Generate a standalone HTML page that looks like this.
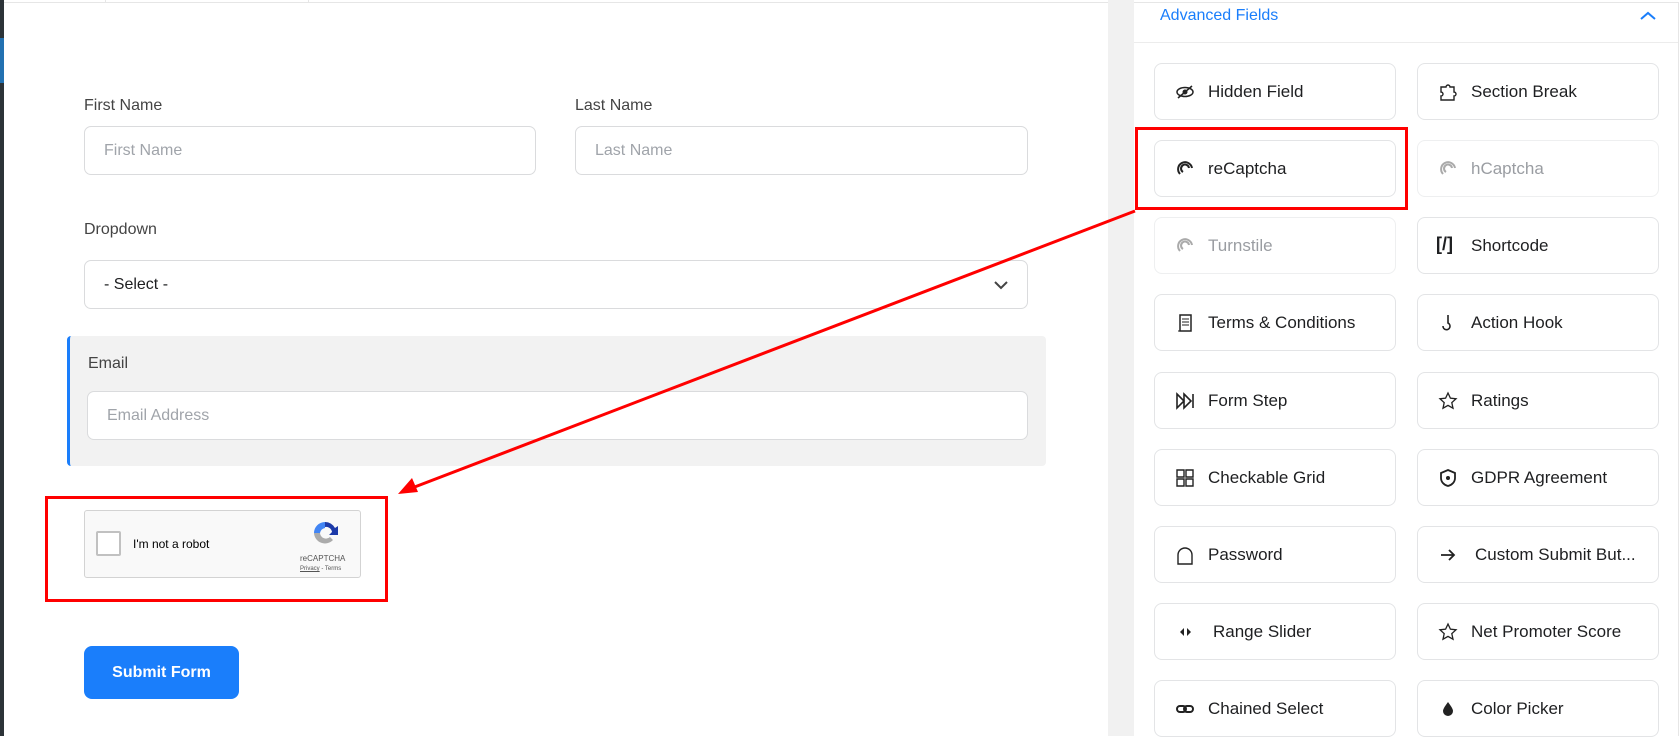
<!DOCTYPE html>
<html><head><meta charset="utf-8"><style>
*{box-sizing:border-box;margin:0;padding:0}
body{width:1679px;height:736px;overflow:hidden;background:#fff;font-family:"Liberation Sans",sans-serif;position:relative;color:#1e1f21}
.a{position:absolute}
.lbl{font-size:16px;color:#444}
.inp{border:1px solid #dadbdd;border-radius:7px;background:#fff;font-size:16px;color:#a0a4aa;padding-left:19px;display:flex;align-items:center}
.card{position:absolute;width:242px;height:57px;border:1px solid #e3e4e6;border-radius:8px;background:#fff;font-size:17px;color:#1e1f21}
.card .ic{position:absolute;left:20px;top:18px;width:20px;height:20px}
.card .t{position:absolute;left:53px;top:18px;white-space:nowrap}
.dis{color:#9a9da2;border-color:#eeeff0}
</style></head><body>
<div class="a" style="left:0;top:0;width:4px;height:736px;background:#2c3338"></div>
<div class="a" style="left:0;top:38px;width:4px;height:45px;background:#2271b1"></div>
<div class="a" style="left:4px;top:2px;width:1104px;height:1px;background:#e6e6e6"></div>
<div class="a" style="left:105px;top:0;width:1px;height:2px;background:#e6e6e6"></div>
<div class="a" style="left:308px;top:0;width:1px;height:2px;background:#e6e6e6"></div>

<div class="a lbl" style="left:84px;top:97px">First Name</div>
<div class="a inp" style="left:84px;top:126px;width:452px;height:49px">First Name</div>
<div class="a lbl" style="left:575px;top:97px">Last Name</div>
<div class="a inp" style="left:575px;top:126px;width:453px;height:49px">Last Name</div>
<div class="a lbl" style="left:84px;top:221px">Dropdown</div>
<div class="a inp" style="left:84px;top:260px;width:944px;height:49px;color:#1e1f21">- Select -</div>
<svg class="a" style="left:994px;top:280px" width="14" height="10"><path d="M1 2l6 6 6-6" stroke="#444" stroke-width="2" fill="none"/></svg>

<div class="a" style="left:67px;top:336px;width:979px;height:130px;background:#f2f2f2;border-left:3px solid #1a7efb;border-radius:4px"></div>
<div class="a lbl" style="left:88px;top:355px">Email</div>
<div class="a inp" style="left:87px;top:391px;width:941px;height:49px">Email Address</div>

<div class="a" style="left:45px;top:496px;width:343px;height:106px;border:3px solid #f00"></div>
<div class="a" style="left:84px;top:510px;width:277px;height:68px;background:#f9f9f9;border:1px solid #d3d3d3;border-radius:3px"></div>
<div class="a" style="left:96px;top:531px;width:25px;height:25px;background:#fff;border:2px solid #c1c1c1;border-radius:2px"></div>
<div class="a" style="left:133px;top:537px;font-size:12px;color:#000">I'm not a robot</div>
<svg class="a" style="left:311px;top:519px" width="28" height="28" viewBox="0 0 28 28"><path d="M14 3a11 11 0 0 1 10 6l3-2v9h-9l3-3a6 6 0 0 0-7-5z" fill="#1c3aa9"/><path d="M3 14A11 11 0 0 1 14 3v6a6 6 0 0 0-5 5z" fill="#4285f4"/><path d="M3 14h6a6 6 0 0 0 10 4l3 3A11 11 0 0 1 3 14z" fill="#ababab"/></svg>
<div class="a" style="left:300px;top:554px;font-size:8px;color:#555">reCAPTCHA</div>
<div class="a" style="left:300px;top:566px;font-size:6px;color:#555"><u>Privacy</u> - Terms</div>

<div class="a" style="left:84px;top:646px;width:155px;height:53px;background:#1a7efb;border-radius:8px;color:#fff;font-weight:bold;font-size:16px;display:flex;align-items:center;justify-content:center">Submit Form</div>

<div class="a" style="left:1108px;top:0;width:26px;height:736px;background:#f1f1f1"></div>
<div class="a" style="left:1134px;top:2px;width:545px;height:734px;border-right:1px solid #e6e6e6;border-top:1px solid #e6e6e6"></div>
<div class="a" style="left:1134px;top:42px;width:544px;height:1px;background:#ececec"></div>
<div class="a" style="left:1160px;top:7px;font-size:16px;color:#1a7efb">Advanced Fields</div>
<svg class="a" style="left:1640px;top:11px" width="16" height="10"><path d="M1 8l7-6 7 6" stroke="#1a7efb" stroke-width="2" fill="none"/></svg>

<div class="card" style="left:1154px;top:63px"><svg class="ic" viewBox="0 0 20 20"><ellipse cx="10" cy="10" rx="8" ry="4.5" fill="none" stroke="#222" stroke-width="1.5"/><circle cx="10" cy="10" r="2.5" fill="#222"/><path d="M3 16L17 4" stroke="#222" stroke-width="1.5"/></svg><span class="t">Hidden Field</span></div>
<div class="card" style="left:1417px;top:63px"><svg class="ic" viewBox="0 0 20 20"><path d="M3 5h5a2 2 0 1 1 4 0h4v5a2 2 0 1 1 0 4v4H3v-4a2 2 0 1 0 0-4z" fill="none" stroke="#222" stroke-width="1.4"/></svg><span class="t">Section Break</span></div>
<div class="card" style="left:1154px;top:140px"><svg class="ic" viewBox="0 0 20 20"><path d="M5 15A7 7 0 1 1 17 9M8 13a4 4 0 1 1 6-4" fill="none" stroke="#222" stroke-width="2"/></svg><span class="t">reCaptcha</span></div>
<div class="card dis" style="left:1417px;top:140px"><svg class="ic" viewBox="0 0 20 20"><path d="M5 15A7 7 0 1 1 17 9M8 13a4 4 0 1 1 6-4" fill="none" stroke="#aaa" stroke-width="2"/></svg><span class="t">hCaptcha</span></div>
<div class="card dis" style="left:1154px;top:217px"><svg class="ic" viewBox="0 0 20 20"><path d="M5 15A7 7 0 1 1 17 9M8 13a4 4 0 1 1 6-4" fill="none" stroke="#aaa" stroke-width="2"/></svg><span class="t">Turnstile</span></div>
<div class="card" style="left:1417px;top:217px"><span class="a" style="left:18px;top:16px;font-size:18px;font-weight:bold">[/]</span><span class="t">Shortcode</span></div>
<div class="card" style="left:1154px;top:294px"><svg class="ic" viewBox="0 0 20 20"><rect x="5" y="2" width="11" height="16" fill="none" stroke="#222" stroke-width="1.5"/><path d="M7 6h7M7 9h7M7 12h7M3 18h13" stroke="#222"/></svg><span class="t">Terms &amp; Conditions</span></div>
<div class="card" style="left:1417px;top:294px"><svg class="ic" viewBox="0 0 20 20"><path d="M10 2v8a3.5 3.5 0 1 1-5 3" fill="none" stroke="#222" stroke-width="1.6"/></svg><span class="t">Action Hook</span></div>
<div class="card" style="left:1154px;top:372px"><svg class="ic" viewBox="0 0 20 20"><path d="M2 3l7 7-7 7zM9 3l7 7-7 7zM18 3v14" fill="none" stroke="#222" stroke-width="1.6"/></svg><span class="t">Form Step</span></div>
<div class="card" style="left:1417px;top:372px"><svg class="ic" viewBox="0 0 20 20"><path d="M10 2l2.4 5.2 5.6.6-4.2 3.8 1.2 5.6L10 14.4 5 17.2l1.2-5.6L2 7.8l5.6-.6z" fill="none" stroke="#222" stroke-width="1.3"/></svg><span class="t">Ratings</span></div>
<div class="card" style="left:1154px;top:449px"><svg class="ic" viewBox="0 0 20 20"><path d="M2 2h7v7H2zM2 11h7v7H2zM11 11h7v7h-7zM11 2h7v7h-7z" fill="none" stroke="#222" stroke-width="1.4"/></svg><span class="t">Checkable Grid</span></div>
<div class="card" style="left:1417px;top:449px"><svg class="ic" viewBox="0 0 20 20"><path d="M10 2l7 3v5c0 4-3 7-7 8-4-1-7-4-7-8V5z" fill="none" stroke="#222" stroke-width="1.8"/><circle cx="10" cy="10" r="2" fill="#222"/></svg><span class="t">GDPR Agreement</span></div>
<div class="card" style="left:1154px;top:526px"><svg class="ic" viewBox="0 0 20 20"><path d="M3 19V10a7 7 0 0 1 14 0v9z" fill="none" stroke="#222" stroke-width="1.4"/></svg><span class="t">Password</span></div>
<div class="card" style="left:1417px;top:526px"><svg class="ic" viewBox="0 0 20 20"><path d="M3 10h13M11 5l5 5-5 5" fill="none" stroke="#222" stroke-width="1.8"/></svg><span class="t" style="left:57px">Custom Submit But...</span></div>
<div class="card" style="left:1154px;top:603px"><svg class="ic" viewBox="0 0 20 20"><path d="M9 6l-4 4 4 4zM12 6l4 4-4 4z" fill="#222"/></svg><span class="t" style="left:58px">Range Slider</span></div>
<div class="card" style="left:1417px;top:603px"><svg class="ic" viewBox="0 0 20 20"><path d="M10 2l2.4 5.2 5.6.6-4.2 3.8 1.2 5.6L10 14.4 5 17.2l1.2-5.6L2 7.8l5.6-.6z" fill="none" stroke="#222" stroke-width="1.3"/></svg><span class="t">Net Promoter Score</span></div>
<div class="card" style="left:1154px;top:680px"><svg class="ic" viewBox="0 0 20 20"><rect x="2" y="7" width="9" height="6" rx="3" fill="none" stroke="#222" stroke-width="2"/><rect x="9" y="7" width="9" height="6" rx="3" fill="none" stroke="#222" stroke-width="2"/></svg><span class="t">Chained Select</span></div>
<div class="card" style="left:1417px;top:680px"><svg class="ic" viewBox="0 0 20 20"><path d="M10 3c3 4 5 7 5 9a5 5 0 0 1-10 0c0-2 2-5 5-9z" fill="#222"/></svg><span class="t">Color Picker</span></div>

<div class="a" style="left:1135px;top:127px;width:273px;height:83px;border:3px solid #f00"></div>
<svg class="a" style="left:0;top:0" width="1679" height="736"><line x1="1135" y1="211" x2="412" y2="488" stroke="#f00" stroke-width="3"/><path d="M398 494l14-16 6 14z" fill="#f00"/></svg>
</body></html>
